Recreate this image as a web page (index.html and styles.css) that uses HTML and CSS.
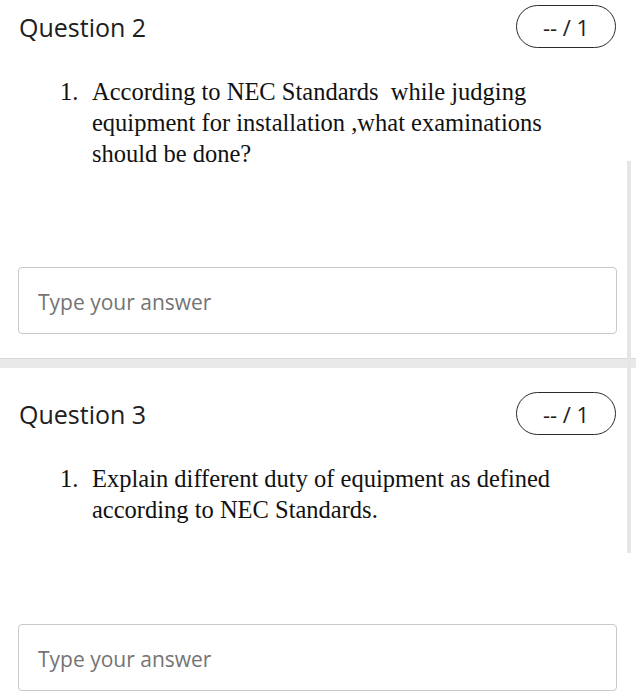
FILE: index.html
```html
<!DOCTYPE html>
<html lang="en">
<head>
<meta charset="utf-8">
<title>Quiz</title>
<link rel="stylesheet" href="styles.css">
</head>
<body>
<main class="page">
  <section class="question first">
    <header class="q-head">
      <h2 class="q-title">Question 2</h2>
      <div class="points">-- / 1</div>
    </header>
    <div class="q-body">
      <span class="q-num">1.</span>
      <p class="q-text">According to NEC Standards&nbsp; while judging equipment for installation ,what examinations should be done?</p>
    </div>
    <input class="answer" type="text" placeholder="Type your answer">
  </section>
  <div class="divider"></div>
  <section class="question second">
    <header class="q-head">
      <h2 class="q-title">Question 3</h2>
      <div class="points">-- / 1</div>
    </header>
    <div class="q-body">
      <span class="q-num">1.</span>
      <p class="q-text">Explain different duty of equipment as defined according to NEC Standards.</p>
    </div>
    <input class="answer" type="text" placeholder="Type your answer">
  </section>
  <div class="scrollbar"></div>
</main>
</body>
</html>
```

FILE: styles.css
```css
html, body {
  margin: 0;
  padding: 0;
  background: #ffffff;
}
.page {
  position: relative;
  width: 636px;
  font-family: "Open Sans", "Noto Sans", sans-serif;
}
.question {
  display: flex;
  flex-direction: column;
  padding: 0 19px 24px 18px;
}
.question.first { padding-top: 5px; }
.question.second { padding-top: 24px; }
.q-head {
  display: flex;
  justify-content: space-between;
  align-items: center;
  padding-left: 1px;
  height: 43px;
}
.q-title {
  margin: 0;
  font-size: 25px;
  font-weight: 400;
  color: #202020;
}
.points {
  box-sizing: border-box;
  width: 100px;
  height: 43px;
  margin-right: 1px;
  border: 1.5px solid #2a2a2a;
  border-radius: 22px;
  display: flex;
  align-items: center;
  justify-content: center;
  font-size: 22px;
  color: #202020;
}
.q-body {
  display: flex;
  margin-top: 28px;
  padding-left: 42px;
  width: 530px;
  font-family: "Liberation Serif", "Times New Roman", serif;
  font-size: 24.5px;
  line-height: 31px;
  color: #111111;
}
.q-num {
  width: 32px;
  flex: none;
}
.q-text {
  margin: 0;
}
.answer {
  box-sizing: border-box;
  margin-top: 98px;
  width: 100%;
  height: 67px;
  border: 1px solid #c9c9c9;
  border-radius: 4px;
  padding: 2px 19px 0;
  font-family: "Open Sans", "Noto Sans", sans-serif;
  font-size: 21px;
  color: #333;
  outline: none;
}
.question.second .answer {
  margin-top: 99px;
}
.answer::placeholder {
  color: #747474;
}
.divider {
  height: 9px;
  border-top: 1px solid #d9d9d9;
  background: #e9e9e9;
}
.scrollbar {
  position: absolute;
  left: 627px;
  top: 161px;
  width: 4px;
  height: 392px;
  background: #e6e6e6;
}
```
